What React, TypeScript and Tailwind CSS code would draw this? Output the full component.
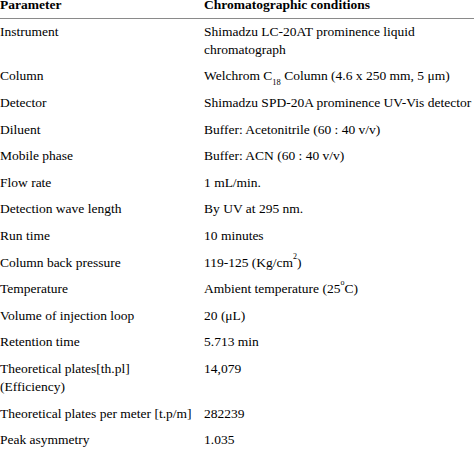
import React from 'react'

type Row = {
  param: React.ReactNode
  value: React.ReactNode
}

const rows: Row[] = [
  {
    param: 'Instrument',
    value: (
      <>
        Shimadzu LC-20AT prominence liquid
        <br />
        chromatograph
      </>
    ),
  },
  {
    param: 'Column',
    value: (
      <>
        Welchrom C<sub className="text-[8.5px] align-[-2px] leading-none">18</sub> Column (4.6 x 250 mm, 5 μm)
      </>
    ),
  },
  { param: 'Detector', value: 'Shimadzu SPD-20A prominence UV-Vis detector' },
  { param: 'Diluent', value: 'Buffer: Acetonitrile (60 : 40 v/v)' },
  { param: 'Mobile phase', value: 'Buffer: ACN (60 : 40 v/v)' },
  { param: 'Flow rate', value: '1 mL/min.' },
  { param: 'Detection wave length', value: 'By UV at 295 nm.' },
  { param: 'Run time', value: '10 minutes' },
  {
    param: 'Column back pressure',
    value: (
      <>
        119-125 (Kg/cm<sup className="text-[8px] align-[4px] leading-none">2</sup>)
      </>
    ),
  },
  {
    param: 'Temperature',
    value: (
      <>
        Ambient temperature (25<sup className="text-[8px] align-[4px] leading-none">o</sup>C)
      </>
    ),
  },
  { param: 'Volume of injection loop', value: '20 (μL)' },
  { param: 'Retention time', value: '5.713 min' },
  {
    param: (
      <>
        Theoretical plates[th.pl]
        <br />
        (Efficiency)
      </>
    ),
    value: '14,079',
  },
  { param: 'Theoretical plates per meter [t.p/m]', value: '282239' },
  { param: 'Peak asymmetry', value: '1.035' },
]

export default function App() {
  return (
    <div className="w-[474px] h-[451px] overflow-hidden bg-white text-black font-['Liberation_Serif','Times_New_Roman',serif] text-[13.5px] leading-[18px]">
      {/* header row, clipped slightly at the top like the source image */}
      <div className="flex mt-[-4px] pb-[3.5px] border-b-[1.5px] border-[#8a8a8a] font-bold">
        <div className="w-[204px] shrink-0">Parameter</div>
        <div className="flex-1 whitespace-nowrap">Chromatographic conditions</div>
      </div>

      {rows.map((row, i) => (
        <div key={i} className="flex py-[4.3px]">
          <div className="w-[204px] shrink-0 whitespace-nowrap">{row.param}</div>
          <div className="flex-1 whitespace-nowrap">{row.value}</div>
        </div>
      ))}
    </div>
  )
}
